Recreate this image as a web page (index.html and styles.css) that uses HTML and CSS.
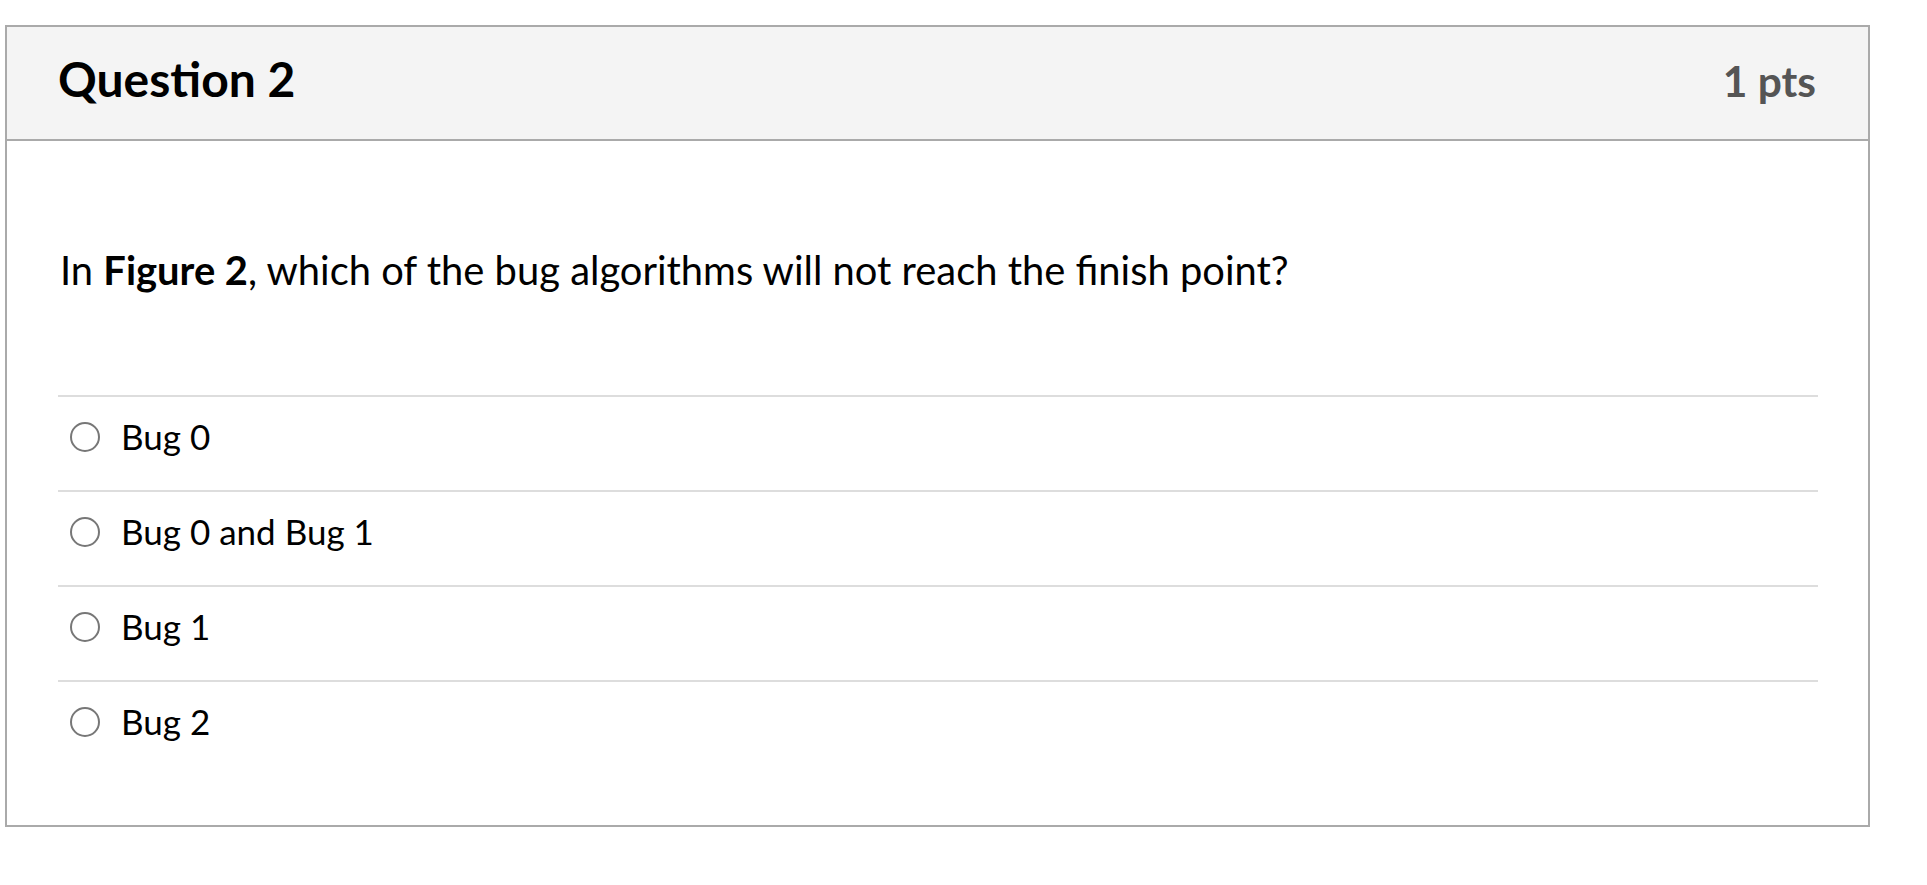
FILE: index.html
```html
<!DOCTYPE html>
<html>
<head>
<meta charset="utf-8">
<link rel="stylesheet" href="styles.css">
</head>
<body>
<div class="question">
  <div class="q-header">
    <h2 class="q-title">Question 2</h2>
    <span class="q-pts">1 pts</span>
  </div>
  <div class="q-body">
    <p class="q-text">In <strong>Figure 2</strong>, which of the bug algorithms will not reach the finish point?</p>
    <div class="answers">
      <label class="answer"><span class="radio"></span><span class="answer-text">Bug 0</span></label>
      <label class="answer"><span class="radio"></span><span class="answer-text">Bug 0 and Bug 1</span></label>
      <label class="answer"><span class="radio"></span><span class="answer-text">Bug 1</span></label>
      <label class="answer"><span class="radio"></span><span class="answer-text">Bug 2</span></label>
    </div>
  </div>
</div>
</body>
</html>
```

FILE: styles.css
```css
html, body {
  margin: 0;
  background: #fff;
}
body {
  padding: 25px 0 0 5px;
  font-family: Lato, "Noto Sans", sans-serif;
  color: #000;
}
.question {
  width: 1865px;
  box-sizing: border-box;
  border: 2px solid #aaaaaa;
}
.q-header {
  display: flex;
  justify-content: space-between;
  align-items: baseline;
  background: #f4f4f4;
  border-bottom: 2px solid #aaaaaa;
  padding: 22.6px 52px 31.8px 51px;
}
.q-title {
  margin: 0;
  font-size: 48px;
  line-height: 57.6px;
  font-weight: 700;
}
.q-pts {
  font-size: 42.5px;
  line-height: 52px;
  font-weight: 700;
  color: #555555;
}
.q-body {
  padding: 100.5px 50px 50px 51px;
}
.q-text {
  margin: 0 0 95.5px 2px;
  font-size: 39.9px;
  line-height: 57.75px;
}
.answers {
  display: flex;
  flex-direction: column;
}
.answer {
  display: flex;
  align-items: center;
  border-top: 2px solid #dddddd;
  padding: 13px 0 27.5px 12px;
  height: 52.5px;
}
.radio {
  width: 30px;
  height: 30px;
  box-sizing: border-box;
  border: 2px solid #777777;
  border-radius: 50%;
  margin-top: 2px;
  margin-right: 21px;
  flex: none;
}
.answer-text {
  font-size: 35px;
  line-height: 52.5px;
}
```
